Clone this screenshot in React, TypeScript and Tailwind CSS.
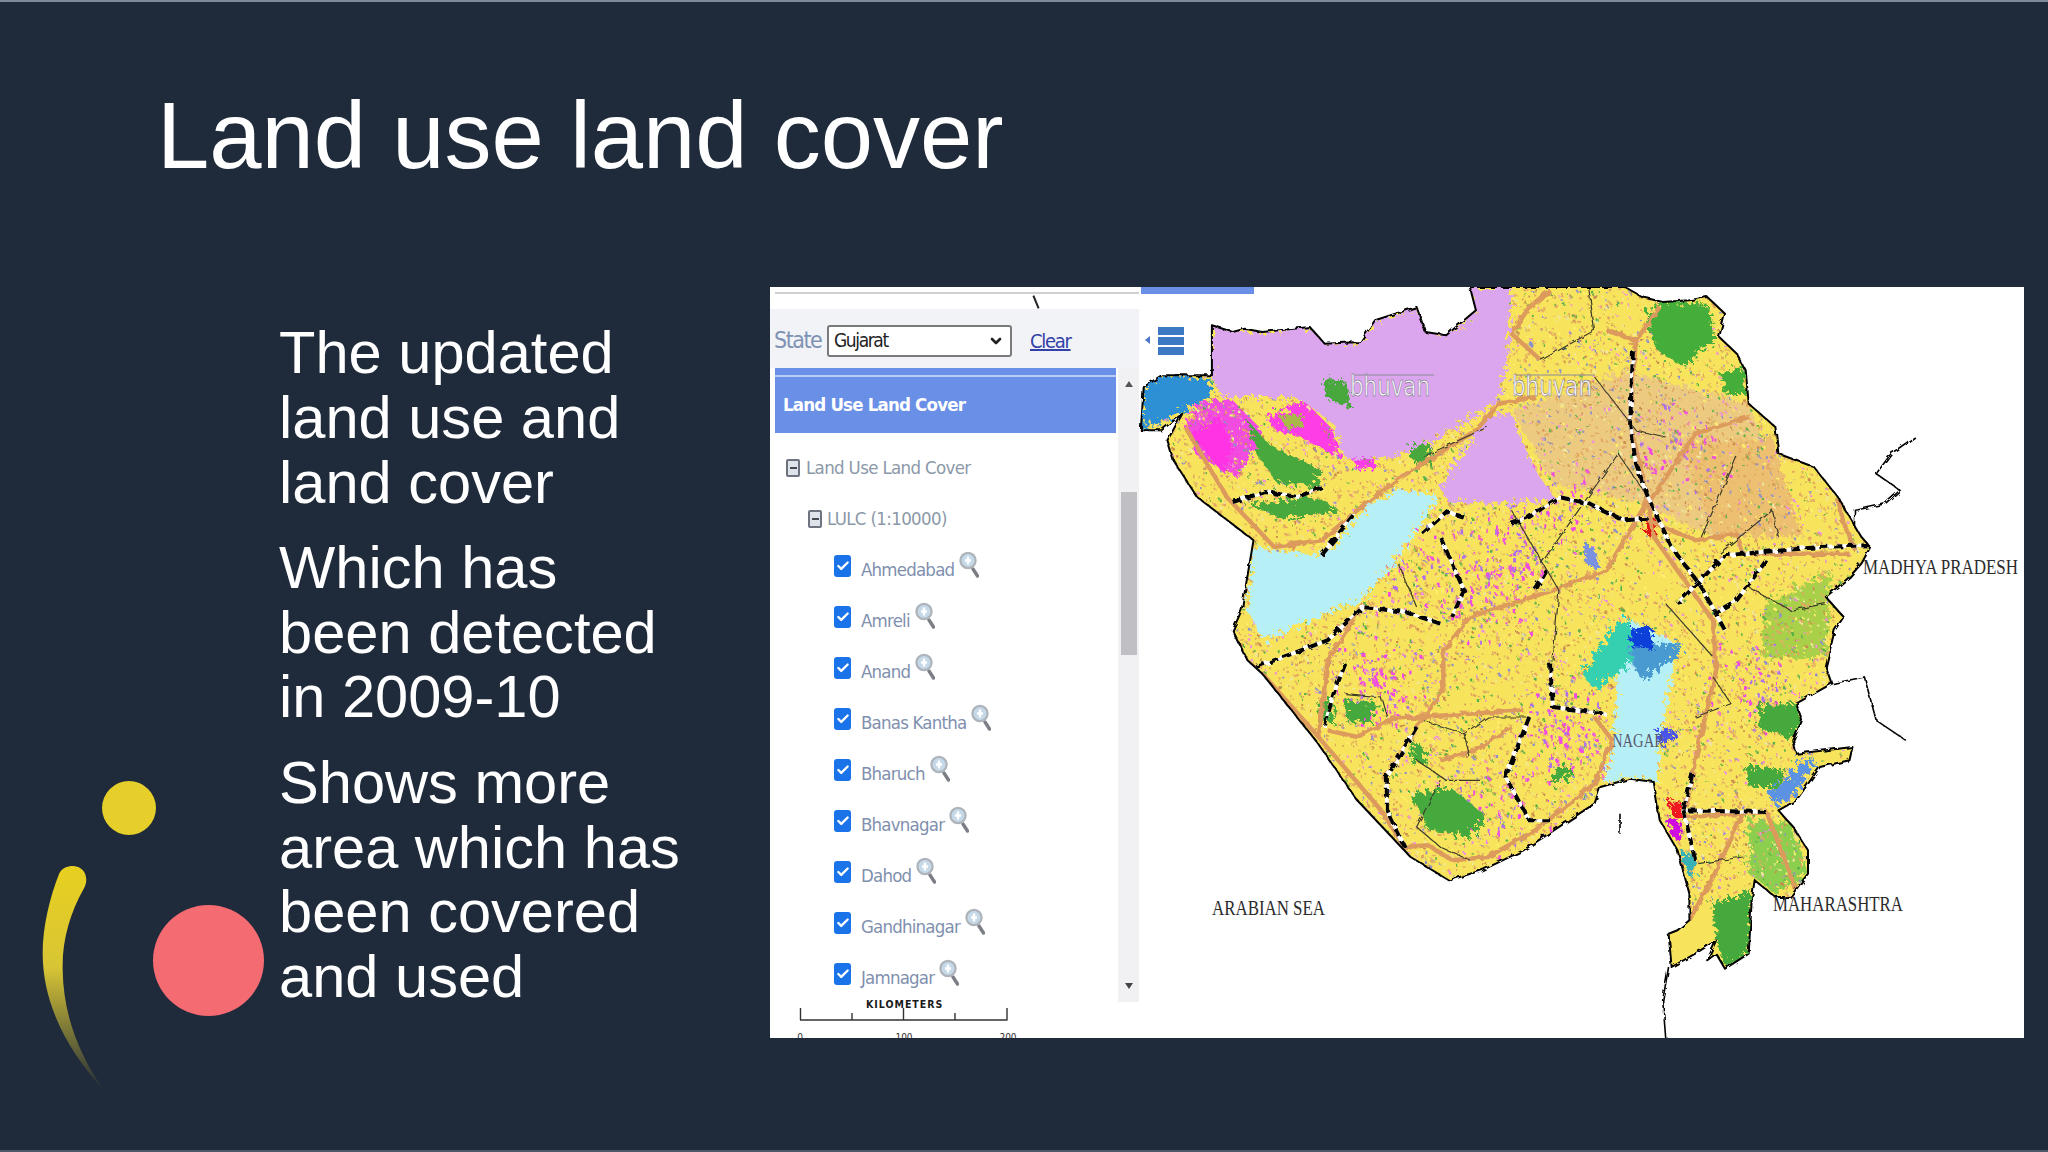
import { Check, ChevronDown } from 'lucide-react';

type Pt = [number, number];

// map traced from the reference crops: x scale 1.686, y scale 3, origin at x=1139 / y=287
const LOWER = 1170;
const low = (pts: Pt[]): Pt[] => pts.map(([x, y]) => [x, y + LOWER]);
const sx = (x: number) => x / 1.686 - 19;
const sy = (y: number) => (y - 50) / 3;
const toPoints = (pts: Pt[]) => pts.map(([x, y]) => `${sx(x).toFixed(1)},${sy(y).toFixed(1)}`).join(' ');

const outline: Pt[] = [
    [155, 315], [155, 165], [190, 185], [210, 175], [240, 185], [320, 170], [345, 220], [405, 215], [430, 150], [500, 110], [515, 185], [550, 195], [600, 120], [590, 50],
    [850, 50], [880, 80], [915, 95], [960, 90], [990, 80], [1020, 130], [1010, 200], [1040, 250], [1055, 300], [1060, 400], [1105, 470], [1110, 550], [1170, 590], [1210, 680], [1250, 800], [1265, 830], [1250, 880], [1230, 920], [1190, 980], [1220, 1040], [1205, 1080], [1190, 1190],
    ...low([
        [1200, 70], [1140, 130], [1150, 180], [1135, 240], [1140, 280], [1235, 260], [1230, 300], [1180, 320], [1140, 420], [1110, 450], [1135, 500], [1160, 570], [1160, 640], [1130, 710], [1105, 710], [1070, 660], [1065, 720], [1060, 880], [1020, 925], [1005, 880], [990, 900], [1005, 840], [970, 880], [930, 920], [925, 820], [940, 810], [960, 780], [960, 700], [940, 570], [910, 480], [900, 365], [860, 355], [810, 380], [800, 430], [680, 570], [610, 630], [555, 660], [490, 590], [400, 420], [330, 240], [240, 40], [215, 0],
    ]),
    [190, 1080], [205, 1020], [225, 810], [130, 680], [90, 570], [80, 510], [105, 430], [70, 480], [35, 480], [40, 350], [70, 315],
];

// under the speckle: land use that shows through it
const patches: { c: string; p: Pt[] }[] = [
    { c: '#eccb80', p: [[660, 420], [860, 300], [1060, 400], [1105, 600], [1000, 800], [880, 700], [730, 640]] },
    { c: '#ecc070', p: [[950, 520], [1100, 500], [1150, 800], [1000, 800]] },
    { c: '#f24ce0', p: [[110, 470], [130, 400], [190, 390], [240, 480], [200, 620], [130, 560]] },
    { c: '#ff3ee6', p: [[250, 440], [310, 390], [360, 480], [370, 560], [300, 500], [260, 480]] },
    { c: '#ff3ee6', p: [[390, 560], [430, 540], [430, 590], [400, 600]] },
    { c: '#a8d048', p: [[1090, 1000], [1200, 900], [1190, 1160], [1080, 1160]] },
    { c: '#8ccf50', p: low([[1060, 480], [1130, 490], [1160, 640], [1105, 700], [1060, 640]]) },
];

// over the speckle: solid areas
const solids: { c: string; p: Pt[] }[] = [
    { c: '#2f90d4', p: [[35, 480], [40, 350], [70, 315], [155, 325], [150, 380], [100, 430]] },
    { c: '#dba6ee', p: [[155, 315], [155, 165], [190, 185], [240, 185], [320, 170], [345, 220], [405, 215], [430, 150], [500, 110], [515, 185], [550, 195], [600, 120], [590, 50], [660, 50], [655, 220], [640, 390], [560, 480], [470, 560], [380, 570], [360, 460], [300, 380], [170, 380]] },
    { c: '#dba6ee', p: [[620, 430], [660, 430], [700, 600], [735, 690], [640, 700], [550, 690], [540, 650]] },
    { c: '#ff3ee6', p: [[255, 450], [300, 400], [340, 470], [360, 555], [300, 490]] },
    { c: '#ff30e4', p: [[120, 490], [170, 440], [190, 540], [175, 610]] },
    { c: '#a8b848', p: [[270, 440], [310, 430], [310, 470], [280, 475]] },
    { c: '#4aa83e', p: [[215, 450], [250, 520], [340, 600], [330, 650], [265, 640], [230, 550]] },
    { c: '#4aa83e', p: [[340, 330], [380, 330], [390, 410], [350, 390]] },
    { c: '#4aa83e', p: [[490, 530], [525, 520], [520, 590], [495, 580]] },
    { c: '#4aa83e', p: [[215, 700], [330, 680], [370, 720], [280, 750]] },
    { c: '#44ae3a', p: [[885, 130], [915, 95], [990, 100], [1005, 200], [950, 290], [905, 240]] },
    { c: '#44ae3a', p: [[1015, 310], [1055, 280], [1055, 370], [1020, 375]] },
    { c: '#b6f0f6', p: [[225, 830], [300, 850], [350, 850], [420, 700], [470, 660], [535, 675], [500, 780], [460, 880], [410, 985], [240, 1110], [215, 1020]] },
    { c: '#b6f0f6', p: [[850, 1040], [940, 1120], [920, LOWER + 130], [905, LOWER + 360], [860, LOWER + 350], [815, LOWER + 370], [835, LOWER + 200], [840, LOWER]] },
    { c: '#35d0b0', p: [[835, 1060], [860, 1040], [860, 1180], [800, LOWER + 90], [780, LOWER + 40]] },
    { c: '#4a9ad0', p: [[860, 1120], [950, 1120], [930, 1170], [880, LOWER + 60], [860, 1170]] },
    { c: '#0840d8', p: [[860, 1080], [895, 1065], [900, 1135], [860, 1130]] },
    { c: '#4a55e8', p: low([[905, 210], [945, 215], [910, 260]]) },
    ...[
        [[335, 130], [360, 110], [360, 180], [340, 190]], [[380, 120], [440, 130], [420, 180], [385, 190]],
        [[490, 260], [510, 250], [515, 305], [490, 310]], [[490, 400], [560, 385], [620, 470], [590, 530], [520, 510]],
        [[1080, 135], [1140, 130], [1150, 190], [1135, 240], [1075, 200]], [[1055, 320], [1120, 320], [1110, 380], [1060, 380]],
        [[1000, 730], [1065, 690], [1060, 880], [1020, 925], [1005, 840]], [[740, 320], [765, 320], [750, 360], [720, 370]],
    ].map((p) => ({ c: '#45a93d', p: low(p as Pt[]) })),
    { c: '#5c92e2', p: low([[1095, 400], [1150, 300], [1175, 300], [1130, 420], [1100, 430]]) },
    { c: '#f01820', p: low([[925, 425], [945, 420], [950, 470], [930, 470]]) },
    { c: '#d010e0', p: low([[925, 470], [945, 480], [945, 545], [930, 530]]) },
    { c: '#38b0b8', p: low([[945, 570], [970, 590], [965, 650], [955, 640]]) },
    { c: '#e01818', p: [[885, 745], [905, 740], [900, 800], [885, 790]] },
    { c: '#7a90e0', p: [[780, 830], [800, 830], [810, 890], [790, 890]] },
];

const orange: Pt[][] = [
    [[725, 60], [690, 110], [660, 190], [710, 270]],
    [[820, 180], [870, 210], [910, 110]],
    [[870, 200], [860, 460], [890, 690], [820, 900], [730, 960], [590, 1040], [545, 1140], ...low([[545, 90], [500, 200], [445, 360]])],
    [[1060, 440], [970, 490], [890, 700], [900, 800], [1000, 1050], ...low([[1005, 30], [970, 300], [955, 440]])],
    [[110, 470], [180, 680], [260, 830], [340, 810], [400, 720], [470, 625], [600, 480], [640, 400], [700, 380]],
    [[890, 750], [970, 810], [1040, 790], [1050, 850], [1230, 850]],
    [[410, 1000], [350, 1170], ...low([[335, 230]])],
    low([[240, 40], [330, 220], [440, 450], [480, 560], [520, 555], [560, 600], [620, 590], [700, 510], [800, 370], [830, 240], [800, 170]]),
    low([[350, 210], [400, 230], [460, 175], [680, 150]]),
    low([[955, 470], [1090, 455], [1140, 690]]),
    low([[1050, 460], [1000, 650], [960, 780]]),
    low([[540, 300], [600, 270], [660, 200]]),
    [[1210, 680], [1220, 760], [1240, 840]],
];

const rail: Pt[][] = [
    [[190, 695], [245, 665], [300, 680], [340, 650]],
    [[340, 855], [395, 730]],
    [[510, 790], [550, 725], [580, 740]],
    [[660, 760], [690, 740], [740, 680], [790, 700], [850, 750], [890, 745]],
    [[865, 240], [860, 460], [870, 580], [890, 680], [930, 830], [980, 950], [1020, 1080]],
    [[1265, 825], [1180, 830], [1020, 855], [940, 1000]],
    [[1090, 870], [1040, 990], [1000, 1030]],
    [[230, 1190], [350, 1110], [410, 1010], [480, 1025], [540, 1060]],
    [[540, 800], [580, 960], [560, 1040]],
    [[720, 900], [700, 960]],
    low([[380, 10], [360, 100], [345, 200]]),
    low([[725, 10], [730, 140], [820, 160]]),
    low([[690, 170], [650, 350], [690, 480], [725, 480]]),
    low([[500, 200], [450, 350], [450, 450], [480, 560]]),
    low([[965, 340], [950, 450], [1090, 455]]),
    low([[950, 450], [970, 600]]),
];

const thin: Pt[][] = [
    [[710, 270], [800, 180], [790, 50]],
    [[800, 320], [870, 480], [920, 500]],
    [[710, 880], [840, 550], [890, 680]],
    [[1040, 560], [980, 800]],
    [[1010, 850], [1100, 720], [1110, 800]],
    [[470, 880], [500, 1010]],
    [[660, 720], [740, 960], [730, 1170]],
    [[510, 560], [620, 470]],
    [[920, 1000], [1000, 1160]],
    [[1060, 950], [1130, 1020], [1190, 1000]],
    low([[510, 180], [580, 220], [620, 170], [690, 170]]),
    low([[580, 220], [590, 290]]),
    low([[500, 300], [550, 360], [610, 360]]),
    low([[500, 500], [540, 560], [590, 600]]),
    low([[970, 170], [1030, 130], [1000, 50]]),
    low([[975, 610], [1050, 590]]),
    low([[540, 360], [500, 500]]),
    low([[380, 100], [440, 110], [450, 170]]),
];

const extraBorders: Pt[][] = [
    [[1340, 500], [1300, 550], [1275, 610], [1315, 660], [1290, 700], [1240, 720], [1240, 770]],
    low([[1200, 70], [1255, 50], [1275, 180], [1325, 240]]),
    low([[925, 920], [915, 1020], [920, 1133]]),
    low([[843, 460], [843, 520]]),
];

// pink clusters seen in the farm land
const pinkSpots: Pt[] = [[600, 900], [630, 970], [480, 880], [730, 700], [660, 800], [950, 520], ...low([[770, 230], [640, 440], [450, 100], [745, 200], [420, 40], [1070, 70]])];

// small seeded generator so the speckle is the same on every load
function speckle() {
    let seed = 7331;
    const rnd = () => {
        seed = (seed * 16807) % 2147483647;
        return seed / 2147483647;
    };
    const colours = ['#e3a564', '#e3a564', '#e3a564', '#e3a564', '#d9b860', '#ee8ce0', '#58b048', '#8f90c8', '#f0e8a0', '#c98a50', '#fff06a'];
    const out: { x: number; y: number; w: number; h: number; c: string }[] = [];
    for (let i = 0; i < 19000; i++) {
        out.push({
            x: rnd() * 760,
            y: rnd() * 620,
            w: 0.9 + rnd() * 1.9,
            h: 0.9 + rnd() * 2.2,
            c: colours[Math.floor(rnd() * colours.length)],
        });
    }
    pinkSpots.forEach(([px, py]) => {
        for (let i = 0; i < 55; i++) {
            out.push({
                x: sx(px) + (rnd() + rnd() - 1) * 52,
                y: sy(py) + (rnd() + rnd() - 1) * 52,
                w: 1 + rnd() * 2.2,
                h: 1.5 + rnd() * 4,
                c: rnd() > 0.35 ? '#f04ce0' : '#b070e8',
            });
        }
    });
    return out;
}
const dots = speckle();

function GujaratMap() {
    return (
        <svg viewBox="0 0 885 751" className="block w-[885px] h-[751px]">
            <defs>
                <clipPath id="state">
                    <polygon points={toPoints(outline)} />
                </clipPath>
                <filter id="soft" filterUnits="userSpaceOnUse" x="0" y="0" width="885" height="751">
                    <feTurbulence type="fractalNoise" baseFrequency="0.14" numOctaves="2" seed="4" result="n" />
                    <feDisplacementMap in="SourceGraphic" in2="n" scale="5" result="d" />
                    <feGaussianBlur in="d" stdDeviation="0.5" />
                </filter>
                <filter id="rough" filterUnits="userSpaceOnUse" x="0" y="0" width="885" height="751">
                    <feTurbulence type="fractalNoise" baseFrequency="0.22" numOctaves="3" seed="11" result="n" />
                    <feDisplacementMap in="SourceGraphic" in2="n" scale="18" />
                </filter>
            </defs>

            <g filter="url(#soft)">
                <g clipPath="url(#state)">
                    <rect width="885" height="751" fill="#f8e45c" />
                    <g filter="url(#rough)">
                        {patches.map((f, i) => (
                            <polygon key={i} points={toPoints(f.p)} fill={f.c} />
                        ))}
                    </g>
                    {dots.map((d, i) => (
                        <rect key={i} x={d.x} y={d.y} width={d.w} height={d.h} fill={d.c} />
                    ))}
                    <g filter="url(#rough)">
                        {solids.map((f, i) => (
                            <polygon key={i} points={toPoints(f.p)} fill={f.c} />
                        ))}
                    </g>
                    {orange.map((l, i) => (
                        <polyline key={i} points={toPoints(l)} fill="none" stroke="#dc9a5c" strokeWidth="4.4" strokeLinejoin="round" />
                    ))}
                    {thin.map((l, i) => (
                        <polyline key={i} points={toPoints(l)} fill="none" stroke="#3a3a28" strokeWidth="1.2" />
                    ))}
                    {rail.map((l, i) => (
                        <g key={i}>
                            <polyline points={toPoints(l)} fill="none" stroke="#ffffff" strokeWidth="4" />
                            <polyline points={toPoints(l)} fill="none" stroke="#000000" strokeWidth="4" strokeDasharray="9 5" />
                        </g>
                    ))}
                </g>
                <polygon points={toPoints(outline)} fill="none" stroke="#000000" strokeWidth="2" strokeLinejoin="round" />
                {extraBorders.map((l, i) => (
                    <polyline key={i} points={toPoints(l)} fill="none" stroke="#000000" strokeWidth="1.6" />
                ))}
            </g>

            {/* bhuvan watermark */}
            <g fontFamily="'DejaVu Sans', sans-serif" fontSize="29" fill="#f6f2fa" stroke="#5c5c68" strokeWidth="0.5">
                <text x="211" y="109" textLength="80" lengthAdjust="spacingAndGlyphs">bhuvan</text>
                <text x="373" y="109" textLength="80" lengthAdjust="spacingAndGlyphs">bhuvan</text>
            </g>
            <path d="M215 88h80M378 88h78" stroke="#8a8a98" strokeWidth="1" />

            <g fontFamily="'Liberation Serif', serif" fill="#2b2b2b">
                <text x="724" y="287" fontSize="21" textLength="155" lengthAdjust="spacingAndGlyphs">MADHYA PRADESH</text>
                <text x="473" y="460" fontSize="19" fill="#5a5a70" textLength="52" lengthAdjust="spacingAndGlyphs">NAGAR</text>
                <text x="73" y="628" fontSize="21" textLength="113" lengthAdjust="spacingAndGlyphs">ARABIAN SEA</text>
                <text x="634" y="624" fontSize="21" textLength="130" lengthAdjust="spacingAndGlyphs">MAHARASHTRA</text>
            </g>
        </svg>
    );
}

function MinusBox() {
    return (
        <span className="w-[14px] h-[18px] rounded-[2px] border-2 border-[#6d7480] bg-[#dfe3ea] flex items-center justify-center shrink-0">
            <span className="w-[7px] h-[2px] bg-[#444b55]" />
        </span>
    );
}

function ZoomIn() {
    return (
        <svg viewBox="0 0 20 28" className="w-[20px] h-[28px] mb-[12px] shrink-0">
            <line x1="14" y1="19" x2="18.5" y2="26" stroke="#7b7f85" strokeWidth="3.4" strokeLinecap="round" />
            <circle cx="9" cy="10.5" r="7.6" fill="#c6d9e8" stroke="#aeb4ba" strokeWidth="2.2" />
            <path d="M9 6.5v8M6 10.5h6" stroke="#ffffff" strokeWidth="2.4" />
        </svg>
    );
}

const districts = ['Ahmedabad', 'Amreli', 'Anand', 'Banas Kantha', 'Bharuch', 'Bhavnagar', 'Dahod', 'Gandhinagar', 'Jamnagar'];

function Sidebar() {
    return (
        <div className="w-[369px] shrink-0 flex flex-col font-['DejaVu_Sans','Noto_Sans',sans-serif] [font-stretch:condensed]">
            <div className="h-[7px] ml-[5px] border-b-2 border-[#d0d0d0]" />
            <div className="h-[15px]" />

            <div className="h-[59px] bg-[#f1f3f6] flex items-center pl-[4px] pt-[4px]">
                <span className="text-[23px] text-[#7f92b4] w-[53px] tracking-[-1.5px]">State</span>
                <div className="w-[185px] h-[32px] bg-white border-2 border-[#7a7a7a] rounded-[3px] flex items-center justify-between pl-[5px] pr-[6px]">
                    <span className="text-[19px] text-[#222222] tracking-[-1.4px]">Gujarat</span>
                    <ChevronDown size={16} strokeWidth={4} className="text-[#222222]" />
                </div>
                <span className="ml-[18px] text-[20px] text-[#3340a8] underline tracking-[-1.3px]">Clear</span>
            </div>

            <div className="flex h-[634px]">
                <div className="w-[346px] pl-[5px] shrink-0">
                    <div className="h-[65px] bg-[#6a8fe6] flex flex-col">
                        <div className="h-[9px] border-b-2 border-[#b8cdf5]" />
                        <div className="flex-1 flex items-center pl-[8px] text-[18.5px] font-bold text-white tracking-[-0.8px]">Land Use Land Cover</div>
                    </div>

                    <div className="pt-[9px]">
                        <div className="h-[51px] flex items-center pl-[11px] gap-[6px] text-[18.5px] text-[#8b98a8] tracking-[-0.65px]">
                            <MinusBox />
                            Land Use Land Cover
                        </div>
                        <div className="h-[51px] flex items-center pl-[33px] gap-[5px] text-[18.5px] text-[#8b98a8] tracking-[-0.65px]">
                            <MinusBox />
                            LULC (1:10000)
                        </div>
                        {districts.map((d) => (
                            <div key={d} className="h-[51px] flex items-center pl-[59px] text-[18.5px] text-[#7f90ae] tracking-[-0.8px]">
                                <span className="w-[17px] h-[22px] rounded-[3px] bg-[#1a73e8] flex items-center justify-center mb-[8px] mr-[10px] shrink-0">
                                    <Check size={14} strokeWidth={4} className="text-white" />
                                </span>
                                {d}
                                <span className="w-[5px]" />
                                <ZoomIn />
                            </div>
                        ))}
                    </div>
                </div>

                <div className="w-[21px] ml-[2px] bg-[#f1f1f4] flex flex-col items-center pt-[13px]">
                    <span className="w-0 h-0 border-x-[4.5px] border-x-transparent border-b-[6px] border-b-[#555555]" />
                    <span className="w-[16px] h-[163px] bg-[#c0c0c4] mt-[105px]" />
                    <span className="w-0 h-0 border-x-[4.5px] border-x-transparent border-t-[6px] border-t-[#444444] mt-[328px]" />
                </div>
            </div>

            {/* scale bar, cut by the bottom edge of the picture */}
            <svg viewBox="0 0 369 36" className="block w-[369px] h-[36px] overflow-visible">
                <text x="96" y="6" fontFamily="'DejaVu Sans', sans-serif" fontSize="10.5" fontWeight="700" letterSpacing="1" fill="#1a1a1a">KILOMETERS</text>
                <path d="M30.5 6v12M82 11v7M133.5 6v12M185 11v7M237 6v12M30 18h207.5" stroke="#333333" strokeWidth="1.4" fill="none" />
                <g fontFamily="'DejaVu Sans', sans-serif" fontSize="10" fill="#333333" textAnchor="middle">
                    <text x="30" y="39">0</text>
                    <text x="134" y="39">100</text>
                    <text x="238" y="39">200</text>
                </g>
            </svg>
        </div>
    );
}

export default function App() {
    return (
        <div className="relative w-[2048px] h-[1152px] overflow-hidden bg-[#1f2a3a] border-t-2 border-t-[#7f8b9a] border-b-2 border-b-[#4c5a68] font-['Liberation_Sans',Arial,sans-serif] text-white">
            {/* yellow and red decoration */}
            <span className="absolute left-[102px] top-[779px] w-[54px] h-[54px] rounded-full bg-[#e6cf2a]" />
            <span className="absolute left-[153px] top-[903px] w-[111px] h-[111px] rounded-full bg-[#f56b72]" />
            <svg viewBox="0 0 900 1236" className="absolute left-0 top-[738px] w-[300px] h-[412px]">
                <defs>
                    <linearGradient id="arc" x1="0" y1="0" x2="0" y2="1">
                        <stop offset="0" stopColor="#e8d020" />
                        <stop offset="0.45" stopColor="#d8c535" />
                        <stop offset="1" stopColor="#d8c535" stopOpacity="0" />
                    </linearGradient>
                </defs>
                <path d="M178 400C150 470 128 560 128 640C128 790 200 930 315 1055C240 950 190 830 188 690C186 600 210 520 252 445C268 415 255 380 220 378C200 378 186 385 178 400Z" fill="url(#arc)" />
            </svg>

            <h1 className="pl-[157px] pt-[78px] text-[94px] leading-[112px] font-normal">Land use land cover</h1>

            <div className="flex mt-[95px]">
                <div className="w-[420px] ml-[279px] pt-[34px] text-[59.6px] leading-[64.8px] flex flex-col gap-[20.5px]">
                    <p>The updated land use and land cover</p>
                    <p>Which has been detected in 2009-10</p>
                    <p>Shows more area which has been covered and used</p>
                </div>

                <div className="ml-[71px] w-[1254px] h-[751px] bg-white flex relative overflow-hidden text-black">
                    <Sidebar />
                    <GujaratMap />
                    {/* tab stub and layer toggle on top of the map */}
                    <span className="absolute left-[371px] top-0 w-[113px] h-[7px] bg-[#6a8fe6]" />
                    <span className="absolute left-[265px] top-[8px] w-[2px] h-[14px] bg-[#222222] -rotate-[22deg]" />
                    <span className="absolute left-[375px] top-[49px] w-0 h-0 border-y-[4px] border-y-transparent border-r-[5px] border-r-[#4a78c8]" />
                    <div className="absolute left-[388px] top-[40px] w-[26px] flex flex-col gap-[2px]">
                        <span className="h-[8px] bg-[#3d78c4]" />
                        <span className="h-[8px] bg-[#3d78c4]" />
                        <span className="h-[8px] bg-[#3d78c4]" />
                    </div>
                </div>
            </div>
        </div>
    );
}
